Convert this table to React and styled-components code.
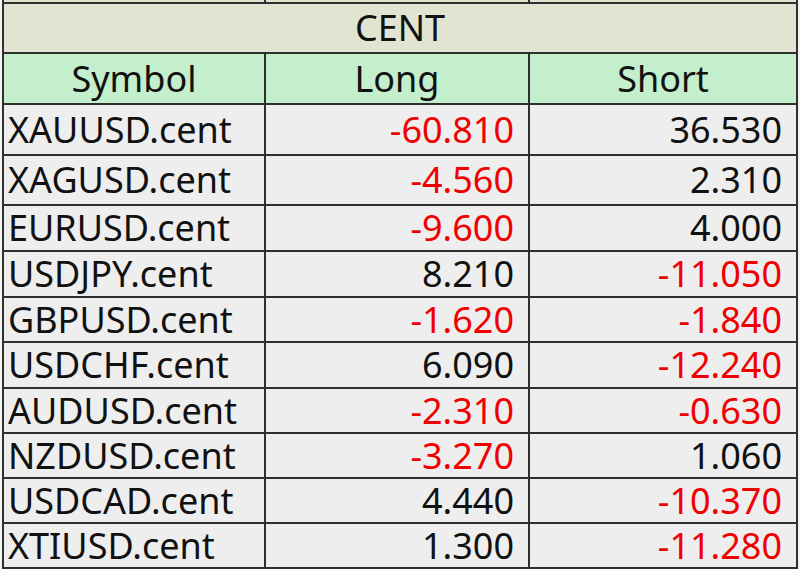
import React from "react";
import styled, { createGlobalStyle } from "styled-components";

const Global = createGlobalStyle`
  html, body { margin: 0; padding: 0; background: #f4f4f0; }
  body { font-family: "Noto Sans", "Open Sans", sans-serif; }
`;

const Page = styled.div`
  width: 800px;
  height: 569px;
  padding-left: 2px;
  box-sizing: border-box;
`;

const COLS = "260px 262px 266px";

const TopStrip = styled.div`
  display: grid;
  grid-template-columns: ${COLS};
  column-gap: 2px;
  padding: 0 2px;
  width: 796px;
  box-sizing: border-box;
  height: 2px;
  background: #2f2f2f;
  & > div { background: #e0e4d0; }
`;

const Grid = styled.div`
  display: grid;
  grid-template-columns: ${COLS};
  grid-template-rows: 48px 49px 49px 48px 44px 44px 43px 44px 43px 43px 43px 43px;
  gap: 2px;
  padding: 2px;
  width: 796px;
  box-sizing: border-box;
  background: #2f2f2f;
`;

const Cell = styled.div`
  display: flex;
  align-items: center;
  justify-content: ${(p) => (p.$align === "left" ? "flex-start" : p.$align === "right" ? "flex-end" : "center")};
  padding: ${(p) => (p.$align === "left" ? "0 0 0 4px" : p.$align === "right" ? "0 14px 0 0" : "0")};
  background: #eeeeee;
  color: ${(p) => (p.$neg ? "#f00000" : "#111111")};
  font-size: 36px;
  line-height: 42px;
  white-space: nowrap;
  min-width: 0;
`;

const TitleCell = styled(Cell)`
  grid-column: 1 / span 3;
  background: #e0e4d0;
`;

const HeadCell = styled(Cell)`
  background: #c3efcc;
`;

const rows = [
  ["XAUUSD.cent", "-60.810", "36.530"],
  ["XAGUSD.cent", "-4.560", "2.310"],
  ["EURUSD.cent", "-9.600", "4.000"],
  ["USDJPY.cent", "8.210", "-11.050"],
  ["GBPUSD.cent", "-1.620", "-1.840"],
  ["USDCHF.cent", "6.090", "-12.240"],
  ["AUDUSD.cent", "-2.310", "-0.630"],
  ["NZDUSD.cent", "-3.270", "1.060"],
  ["USDCAD.cent", "4.440", "-10.370"],
  ["XTIUSD.cent", "1.300", "-11.280"],
];

export default function App() {
  return (
    <>
      <Global />
      <Page>
        <TopStrip>
          <div />
          <div />
          <div />
        </TopStrip>
        <Grid>
          <TitleCell>CENT</TitleCell>
          <HeadCell>Symbol</HeadCell>
          <HeadCell>Long</HeadCell>
          <HeadCell>Short</HeadCell>
          {rows.map(([s, l, sh]) => (
            <React.Fragment key={s}>
              <Cell $align="left">{s}</Cell>
              <Cell $align="right" $neg={l.startsWith("-")}>{l}</Cell>
              <Cell $align="right" $neg={sh.startsWith("-")}>{sh}</Cell>
            </React.Fragment>
          ))}
        </Grid>
      </Page>
    </>
  );
}
